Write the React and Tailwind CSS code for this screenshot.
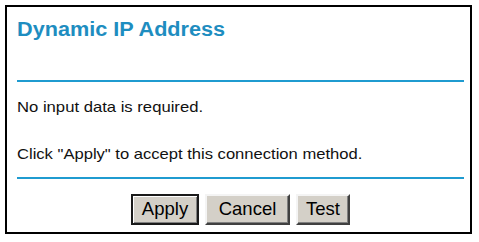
import React from 'react';

function WinButton({ label, width, isDefault }) {
    const base = 'h-[31px] bg-[#d4d0c8] text-[18.5px] leading-none text-black flex items-center justify-center';
    const edge = isDefault
        ? 'border-2 border-[#1a1a1a] shadow-[inset_1px_1px_0_#ffffff,inset_-1px_-1px_0_#808080]'
        : 'border-2 border-t-[#f4f4f4] border-l-[#f4f4f4] border-r-[#404040] border-b-[#404040] shadow-[inset_-1px_-1px_0_#808080]';
    return (
        <button type="button" className={`${base} ${edge} ${width}`}>
            {label}
        </button>
    );
}

export default function App() {
    return (
        <div className="w-[479px] h-[242px] bg-white pt-[5px] pl-[5px] font-['Liberation_Sans',Arial,sans-serif]">
            <div className="w-[467px] h-[229px] border-2 border-black pl-[10px] pr-[6px] pt-[11px] flex flex-col">
                {/* Heading (the shot is stretched a little sideways) */}
                <h1 className="self-start text-[19.5px] leading-[22px] font-bold text-[#1e8dc0] origin-left scale-x-[1.11]">
                    Dynamic IP Address
                </h1>

                <div className="mt-[40px] h-[2px] bg-[#1f9bd0]" />

                {/* Body */}
                <p className="self-start mt-[16px] text-[15px] leading-[18px] text-[#111] origin-left scale-x-[1.11]">
                    No input data is required.
                </p>
                <p className="self-start mt-[29px] text-[15px] leading-[18px] text-[#111] origin-left scale-x-[1.105]">
                    Click "Apply" to accept this connection method.
                </p>

                <div className="mt-[14px] h-[2px] bg-[#1f9bd0]" />

                {/* Buttons */}
                <div className="mt-[15px] flex justify-center gap-[6px]">
                    <WinButton label="Apply" width="w-[68px]" isDefault />
                    <WinButton label="Cancel" width="w-[85px]" />
                    <WinButton label="Test" width="w-[54px]" />
                </div>
            </div>
        </div>
    );
}
